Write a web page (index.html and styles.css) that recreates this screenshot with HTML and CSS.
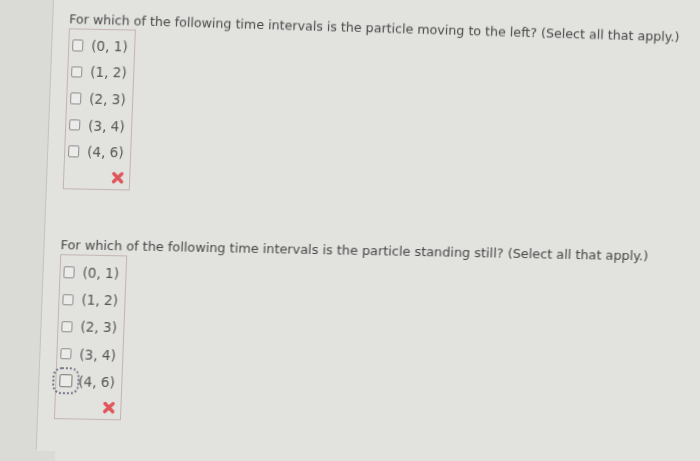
FILE: index.html
```html
<!DOCTYPE html>
<html lang="en">
<head>
<meta charset="utf-8">
<title>Particle motion questions</title>
<link rel="stylesheet" href="styles.css">
</head>
<body>
<div class="page">
  <section class="question first">
    <p class="prompt">For which of the following time intervals is the particle moving to the left? (Select all that apply.)</p>
    <div class="choices">
      <label class="choice"><span class="box"></span><span class="label">(0, 1)</span></label>
      <label class="choice"><span class="box"></span><span class="label">(1, 2)</span></label>
      <label class="choice"><span class="box"></span><span class="label">(2, 3)</span></label>
      <label class="choice"><span class="box"></span><span class="label">(3, 4)</span></label>
      <label class="choice"><span class="box"></span><span class="label">(4, 6)</span></label>
      <div class="mark">
        <svg class="x-icon" viewBox="0 0 13 13" width="13" height="13" aria-label="incorrect"><path d="M2.5 2.5 L10.5 10.5 M10.5 2.5 L2.5 10.5"/></svg>
      </div>
    </div>
  </section>
  <section class="question second">
    <p class="prompt">For which of the following time intervals is the particle standing still? (Select all that apply.)</p>
    <div class="choices">
      <label class="choice"><span class="box"></span><span class="label">(0, 1)</span></label>
      <label class="choice"><span class="box"></span><span class="label">(1, 2)</span></label>
      <label class="choice"><span class="box"></span><span class="label">(2, 3)</span></label>
      <label class="choice"><span class="box"></span><span class="label">(3, 4)</span></label>
      <label class="choice focus"><span class="box"></span><span class="label">(4, 6)</span></label>
      <div class="mark">
        <svg class="x-icon" viewBox="0 0 13 13" width="13" height="13" aria-label="incorrect"><path d="M2.5 2.5 L10.5 10.5 M10.5 2.5 L2.5 10.5"/></svg>
      </div>
    </div>
  </section>
</div>
</body>
</html>
```

FILE: styles.css
```css
html, body {
  margin: 0;
  padding: 0;
}

body {
  width: 700px;
  height: 461px;
  overflow: hidden;
  background: linear-gradient(to right, #dadad6 0, #dadad6 55px, #e2e2df 55px);
  font-family: "DejaVu Sans", Verdana, sans-serif;
}

.page {
  margin-left: 53px;
  width: 647px;
  height: 450px;
  box-sizing: border-box;
  padding: 8.5px 0 0 16px;
  border-left: 1px solid #c2c2be;
  background: #e2e2df;
  transform-origin: 0 0;
  transform: rotate(1.1deg) skewX(-1.1deg);
  filter: blur(0.35px);
}

.prompt {
  margin: 0;
  font-size: 12.65px;
  line-height: 19px;
  color: #474747;
  white-space: nowrap;
}

.first .prompt {
  transform-origin: 0 50%;
  transform: rotate(0.6deg);
}

.second .prompt {
  font-size: 12.85px;
}

.choices {
  width: 67px;
  box-sizing: border-box;
  border: 1px solid #c4b4b1;
  padding: 3px 0 0 2.5px;
}

.choice {
  display: flex;
  align-items: center;
  gap: 8px;
  height: 26.6px;
}

.second .choice {
  height: 27.2px;
}

.box {
  flex: none;
  width: 11.5px;
  height: 11.5px;
  box-sizing: border-box;
  border: 1.5px solid #8e8e8e;
  border-radius: 2px;
  background: #ebebe9;
}

.label {
  font-size: 13.6px;
  color: #565656;
  white-space: nowrap;
}

.second .choice.focus {
  gap: 6.5px;
}

.focus .box {
  width: 13px;
  height: 13px;
  border-color: #777777;
  outline: 2px dotted #737989;
  outline-offset: 5px;
}

.mark {
  height: 24px;
  display: flex;
  align-items: center;
  justify-content: flex-end;
  padding-right: 5px;
}

.x-icon path {
  fill: none;
  stroke: #e0555a;
  stroke-width: 3.4;
  stroke-linecap: round;
}

.second {
  margin-top: 46px;
}
```
